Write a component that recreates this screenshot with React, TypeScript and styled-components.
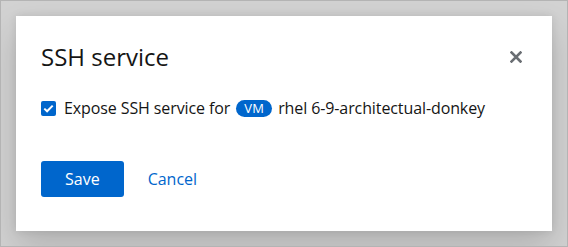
import React from "react";
import styled, { createGlobalStyle } from "styled-components";

const Global = createGlobalStyle`
  html, body { margin: 0; padding: 0; }
  body { font-family: "Open Sans", "Liberation Sans", sans-serif; background: #d2d2d2; }
  * { box-sizing: border-box; }
`;

const Backdrop = styled.div`
  width: 568px;
  height: 247px;
  border: 1px solid #b4b4b4;
  background: #d2d2d2;
  padding: 15px 15px;
  overflow: hidden;
`;

const ModalBox = styled.div`
  background: #fff;
  height: 215px;
  padding: 26px 25px 34px 25px;
  box-shadow: 0 16px 32px 0 rgba(3, 3, 3, 0.16), 0 0 8px 0 rgba(3, 3, 3, 0.1);
  display: flex;
  flex-direction: column;
`;

const Header = styled.div`
  display: flex;
  align-items: center;
  justify-content: space-between;
`;

const Title = styled.h1`
  margin: 0;
  font-size: 24px;
  line-height: 30px;
  font-weight: 400;
  color: #151515;
`;

const CloseButton = styled.button`
  width: 22px;
  height: 22px;
  border: none;
  background: none;
  padding: 0;
  display: flex;
  align-items: center;
  justify-content: center;
  color: #6a6e73;
  cursor: pointer;
`;

const CheckRow = styled.label`
  margin-top: 24px;
  display: flex;
  align-items: center;
  font-size: 16px;
  line-height: 24px;
  letter-spacing: -0.1px;
  color: #151515;
`;

const CheckBox = styled.span`
  width: 15px;
  height: 15px;
  border-radius: 2px;
  background: #0066cc;
  display: flex;
  align-items: center;
  justify-content: center;
  margin-right: 8px;
  flex: none;
`;

const Badge = styled.span`
  display: inline-flex;
  align-items: center;
  height: 17px;
  padding: 0 8px;
  margin: 0 6px 0 6px;
  border-radius: 9px;
  background: #0066cc;
  color: #fff;
  font-size: 13px;
  font-weight: 500;
  letter-spacing: 0.2px;
`;

const Footer = styled.div`
  margin-top: auto;
  display: flex;
  align-items: center;
  gap: 8px;
`;

const Button = styled.button<{ $variant: "primary" | "link" }>`
  height: 36px;
  border: none;
  border-radius: 3px;
  font-family: inherit;
  font-size: 16px;
  cursor: pointer;
  padding: ${(p) => (p.$variant === "primary" ? "0 24px" : "0 16px")};
  background: ${(p) => (p.$variant === "primary" ? "#0066cc" : "transparent")};
  color: ${(p) => (p.$variant === "primary" ? "#fff" : "#0066cc")};
`;

export default function App() {
  return (
    <>
      <Global />
      <Backdrop>
        <ModalBox>
          <Header>
            <Title>SSH service</Title>
            <CloseButton aria-label="Close">
              <svg width="12" height="12" viewBox="0 0 12 12">
                <path d="M1.5 1.5 L10.5 10.5 M10.5 1.5 L1.5 10.5" stroke="currentColor" strokeWidth="2.6" strokeLinecap="square" />
              </svg>
            </CloseButton>
          </Header>
          <CheckRow>
            <CheckBox>
              <svg width="11" height="9" viewBox="0 0 11 9">
                <path d="M1.3 4.6 L4.1 7.3 L9.7 1.6" stroke="#fff" strokeWidth="2" fill="none" />
              </svg>
            </CheckBox>
            Expose SSH service for
            <Badge>VM</Badge>
            rhel 6-9-architectual-donkey
          </CheckRow>
          <Footer>
            <Button $variant="primary">Save</Button>
            <Button $variant="link">Cancel</Button>
          </Footer>
        </ModalBox>
      </Backdrop>
    </>
  );
}
